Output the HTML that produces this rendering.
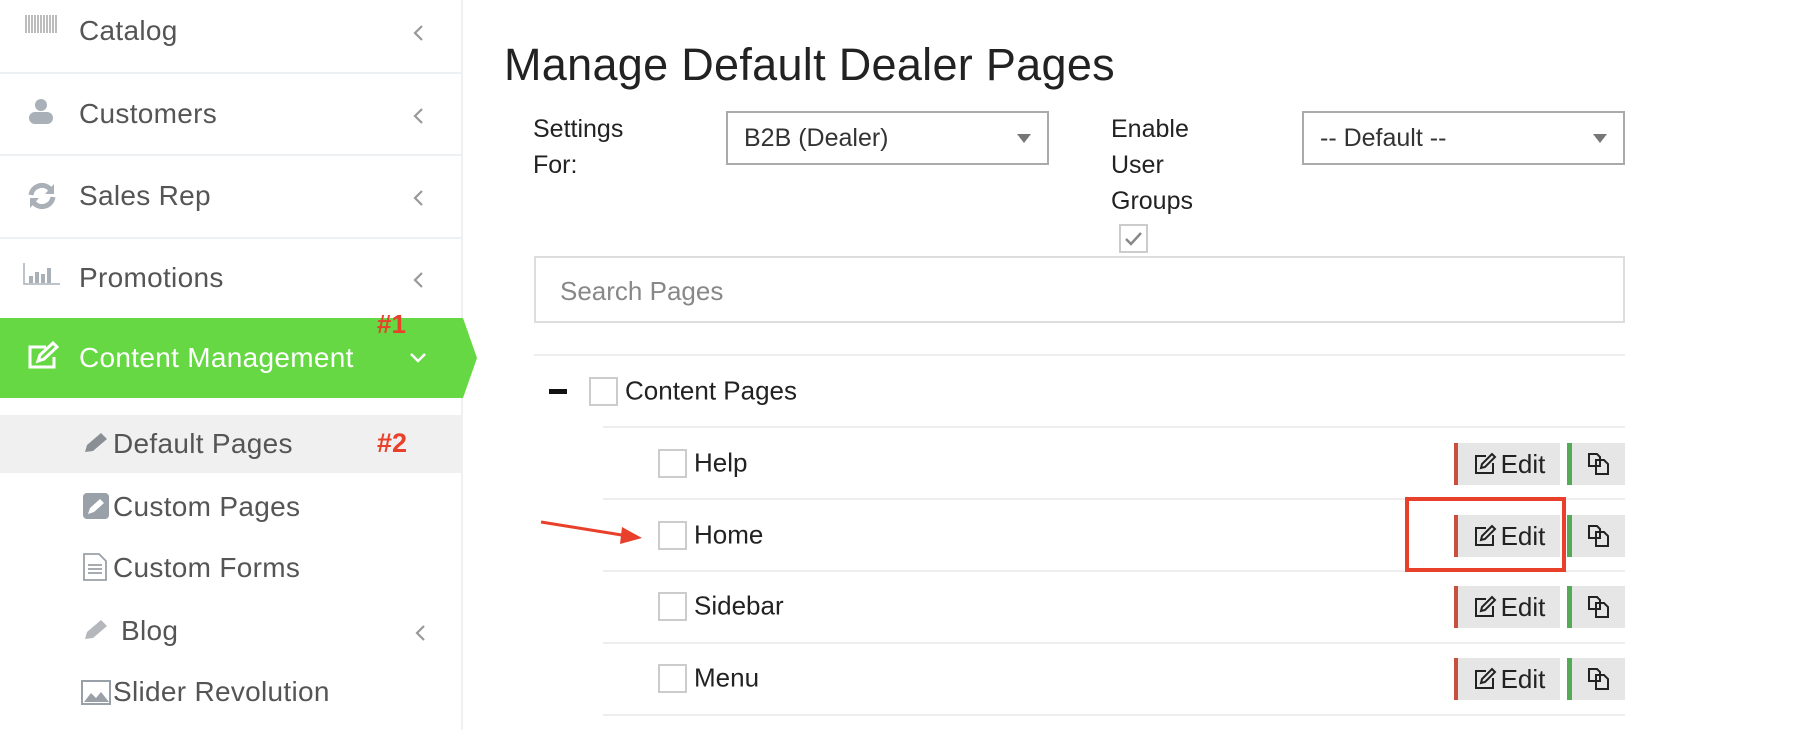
<!DOCTYPE html>
<html><head><meta charset="utf-8"><style>
*{margin:0;padding:0;box-sizing:border-box}
body{width:1818px;height:730px;overflow:hidden;background:#fff;font-family:"Liberation Sans",sans-serif;position:relative;color:#222}
.a{position:absolute;white-space:nowrap}
.side{position:absolute;left:0;top:0;width:463px;height:730px;border-right:2px solid #eef0f2}
.sep{position:absolute;left:0;width:461px;height:2px;background:#eef1f3}
.nav{position:absolute;left:79px;font-size:28px;color:#555;transform:translateY(-50%);letter-spacing:0.3px}
.chev{position:absolute;left:412px;width:12px;height:20px;transform:translateY(-50%)}
.sub{position:absolute;left:113px;font-size:28px;color:#555;transform:translateY(-50%);letter-spacing:0.3px}
.lbl{font-size:25px;color:#222;line-height:36px}
.sel{position:absolute;border:2px solid #aaa;background:#fff;font-size:25px;color:#333;padding-left:16px;display:flex;align-items:center}
.sel:after{content:"";position:absolute;right:16px;top:50%;margin-top:-4px;border-left:7px solid transparent;border-right:7px solid transparent;border-top:9px solid #777}
.cb{position:absolute;width:29px;height:29px;border:2px solid #ccc;background:#fff}
.line{position:absolute;left:603px;width:1022px;height:2px;background:#eee}
.rt{position:absolute;left:694px;font-size:26px;transform:translateY(-50%)}
.ed{position:absolute;left:1454px;width:106px;height:42px;background:#e6e6e6;border-left:4px solid #c9503c;font-size:26px;display:flex;align-items:center;justify-content:center;gap:4px;color:#222}
.cp{position:absolute;left:1567px;width:58px;height:42px;background:#e6e6e6;border-left:5px solid #55aa55;display:flex;align-items:center;justify-content:center}
</style></head><body>
<svg width="0" height="0" style="position:absolute"><defs>
<symbol id="ch" viewBox="0 0 12 20"><path d="M10 3L3 10l7 7" fill="none" stroke="#999" stroke-width="2.2"/></symbol>
<symbol id="e" viewBox="0 0 24 24"><path d="M13 4H3v17h17V11" fill="none" stroke="#222" stroke-width="2"/><path d="M8 16l1-4 10-10 3 3-10 10z" fill="none" stroke="#222" stroke-width="2"/></symbol>
<symbol id="c" viewBox="0 0 24 24"><path d="M2 2h8l3 3v9H2z M9 8h8l4 4v10H9z" fill="#e6e6e6" stroke="#222" stroke-width="2"/></symbol>
</defs></svg>
<div class="side">
  <svg class="a" style="left:24px;top:15px" width="34" height="18"><g stroke="#999" stroke-width="1.3"><path d="M2 0v18M5 0v18M8 0v18M11 0v18M14 0v18M17 0v18M20 0v18M23 0v18M26 0v18M29 0v18M32 0v18"/></g></svg>
  <div class="nav" style="top:31px">Catalog</div><svg class="chev" style="top:33px"><use href="#ch"/></svg>
  <div class="sep" style="top:72px"></div>
  <svg class="a" style="left:28px;top:98px" width="26" height="26"><circle cx="13" cy="7" r="6" fill="#aab0b8"/><rect x="1" y="14" width="24" height="12" rx="6" fill="#aab0b8"/></svg>
  <div class="nav" style="top:114px">Customers</div><svg class="chev" style="top:116px"><use href="#ch"/></svg>
  <div class="sep" style="top:154px"></div>
  <svg class="a" style="left:27px;top:182px" width="30" height="28" fill="none" stroke="#aab0b8" stroke-width="5"><path d="M4 13a11 11 0 0 1 19-6"/><path d="M26 15a11 11 0 0 1-19 6"/><path d="M27 2v10h-9z M3 26v-10h9z" fill="#aab0b8" stroke="none"/></svg>
  <div class="nav" style="top:196px">Sales Rep</div><svg class="chev" style="top:198px"><use href="#ch"/></svg>
  <div class="sep" style="top:237px"></div>
  <svg class="a" style="left:23px;top:263px" width="38" height="22"><path d="M1 0v21h36" stroke="#aab0b8" stroke-width="1.5" fill="none"/><g fill="#aab0b8"><rect x="6" y="13" width="4" height="7"/><rect x="12" y="9" width="4" height="11"/><rect x="18" y="11" width="4" height="9"/><rect x="24" y="5" width="4" height="15"/></g></svg>
  <div class="nav" style="top:278px">Promotions</div><svg class="chev" style="top:280px"><use href="#ch"/></svg>
  <svg class="a" style="left:0;top:318px" width="478" height="80"><path d="M0 0H463L477 40L463 80H0Z" fill="#65d843"/></svg>
  <svg class="a" style="left:26px;top:341px" width="34" height="30" fill="none" stroke="#fff" stroke-width="3"><path d="M20 6H4v20h24V16"/><path d="M12 20l2-6 13-12 4 4-13 12z"/></svg>
  <div class="nav" style="top:358px;color:#fff">Content Management</div>
  <svg class="a" style="left:409px;top:352px" width="18" height="12" fill="none" stroke="#fff" stroke-width="2.5"><path d="M2 2l7 7 7-7"/></svg>
  <div class="a" style="left:377px;top:309px;font-size:26px;font-weight:bold;color:#e8402b">#1</div>
  <div class="a" style="left:0;top:415px;width:461px;height:58px;background:#f0f0f0"></div>
  <svg class="a" style="left:83px;top:432px" width="26" height="22"><path d="M2 20l2-7 14-12 6 6-14 12z" fill="#8a8f96"/></svg>
  <div class="sub" style="top:444px">Default Pages</div>
  <div class="a" style="left:377px;top:428px;font-size:27px;font-weight:bold;color:#e8402b">#2</div>
  <svg class="a" style="left:83px;top:493px" width="26" height="26"><rect width="26" height="26" rx="4" fill="#9aa0a8"/><path d="M5 21l2-6 10-9 4 4-10 9z" fill="#fff"/></svg>
  <div class="sub" style="top:507px">Custom Pages</div>
  <svg class="a" style="left:83px;top:553px" width="24" height="28" fill="none" stroke="#9aa0a8" stroke-width="1.8"><path d="M1 1h15l7 7v19H1z M5 12h14M5 16h14M5 20h14"/></svg>
  <div class="sub" style="top:568px">Custom Forms</div>
  <svg class="a" style="left:83px;top:619px" width="26" height="22"><path d="M2 20l2-7 14-12 6 6-14 12z" fill="#b4b8bd"/></svg>
  <div class="sub" style="top:631px;left:121px">Blog</div><svg class="chev" style="top:633px;left:414px"><use href="#ch"/></svg>
  <svg class="a" style="left:81px;top:680px" width="30" height="25"><rect x="1" y="1" width="28" height="23" fill="none" stroke="#9aa0a8" stroke-width="2"/><path d="M3 22l7-9 5 5 5-6 8 10z" fill="#9aa0a8"/></svg>
  <div class="sub" style="top:692px">Slider Revolution</div>
</div>

<div class="a" style="left:504px;top:39px;font-size:45px;color:#222;letter-spacing:0.3px">Manage Default Dealer Pages</div>
<div class="a lbl" style="left:533px;top:111px">Settings<br>For:</div>
<div class="sel" style="left:726px;top:111px;width:323px;height:54px">B2B (Dealer)</div>
<div class="a lbl" style="left:1111px;top:111px">Enable<br>User<br>Groups</div>
<div class="cb" style="left:1119px;top:224px;border-color:#ccc"><svg width="25" height="25" style="position:absolute;left:0;top:0"><path d="M5 13l5 5 10-11" fill="none" stroke="#888" stroke-width="2.5"/></svg></div>
<div class="sel" style="left:1302px;top:111px;width:323px;height:54px">-- Default --</div>
<div class="a" style="left:534px;top:256px;width:1091px;height:67px;border:2px solid #ddd;font-size:26px;color:#888;padding-left:24px;line-height:67px">Search Pages</div>
<div class="a" style="left:534px;top:354px;width:1091px;height:2px;background:#eee"></div>
<div class="a" style="left:549px;top:389px;width:18px;height:5px;background:#111"></div>
<div class="cb" style="left:589px;top:377px"></div>
<div class="rt" style="left:625px;top:391px">Content Pages</div>

<div class="line" style="top:426px"></div>
<div class="line" style="top:498px"></div>
<div class="line" style="top:570px"></div>
<div class="line" style="top:642px"></div>
<div class="line" style="top:714px"></div>

<div class="cb" style="left:658px;top:449px"></div><div class="rt" style="top:463px">Help</div>
<div class="cb" style="left:658px;top:521px"></div><div class="rt" style="top:535px">Home</div>
<div class="cb" style="left:658px;top:592px"></div><div class="rt" style="top:606px">Sidebar</div>
<div class="cb" style="left:658px;top:664px"></div><div class="rt" style="top:678px">Menu</div>

<div class="ed" style="top:443px"><svg width="24" height="24"><use href="#e"/></svg>Edit</div><div class="cp" style="top:443px"><svg width="24" height="24"><use href="#c"/></svg></div>
<div class="ed" style="top:515px"><svg width="24" height="24"><use href="#e"/></svg>Edit</div><div class="cp" style="top:515px"><svg width="24" height="24"><use href="#c"/></svg></div>
<div class="ed" style="top:586px"><svg width="24" height="24"><use href="#e"/></svg>Edit</div><div class="cp" style="top:586px"><svg width="24" height="24"><use href="#c"/></svg></div>
<div class="ed" style="top:658px"><svg width="24" height="24"><use href="#e"/></svg>Edit</div><div class="cp" style="top:658px"><svg width="24" height="24"><use href="#c"/></svg></div>

<div class="a" style="left:1405px;top:497px;width:161px;height:75px;border:4px solid #e8402b"></div>
<svg class="a" style="left:538px;top:516px" width="110" height="30"><line x1="3" y1="6" x2="90" y2="20" stroke="#e8402b" stroke-width="3"/><path d="M104 22L84 11L82 28Z" fill="#e8402b"/></svg>
</body></html>
